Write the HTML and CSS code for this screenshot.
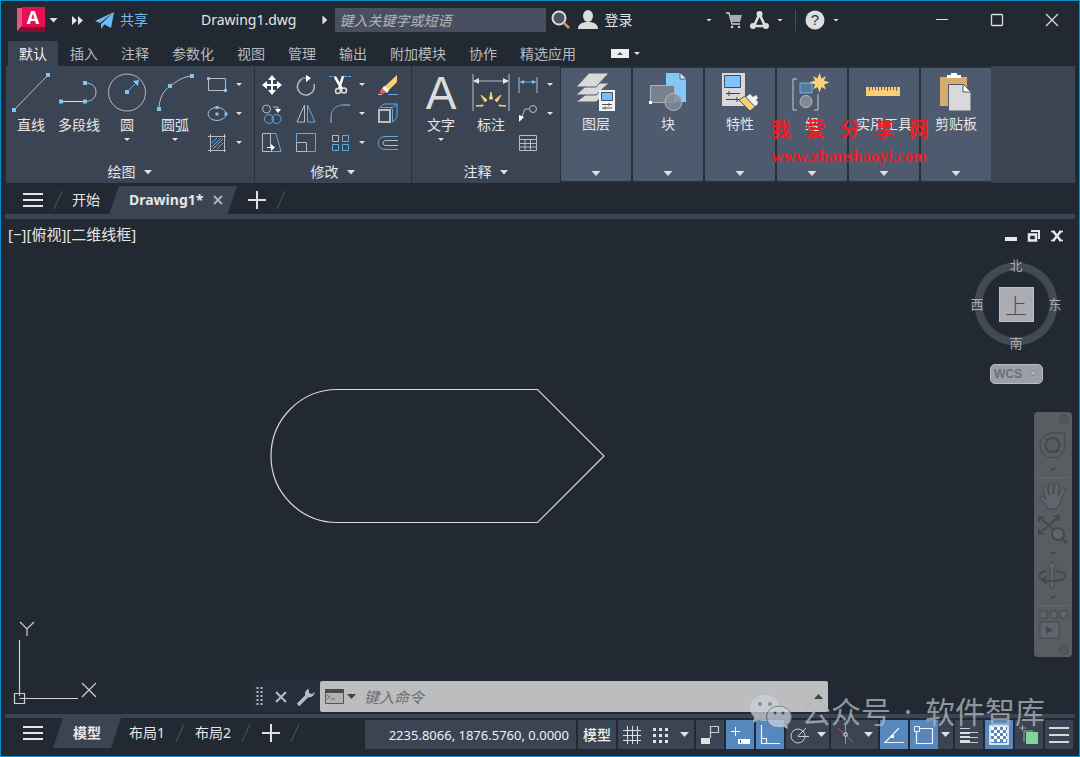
FILE: index.html
```html
<!DOCTYPE html>
<html lang="zh-CN">
<head>
<meta charset="utf-8">
<title>Drawing1.dwg</title>
<link rel="stylesheet" href="styles.css">
</head>
<body>
<div class="app">

<header class="titlebar">
  <button class="logo" aria-label="应用程序菜单">
    <svg width="28" height="26" viewBox="0 0 28 26"><path d="M0 1h5v18l-5 5z" fill="#e8557f"/><path d="M5 0h23v20H5z" fill="#e51050"/><path d="M5 20h23v5H0z" fill="#8d0a32"/><text x="16" y="17" class="logo-letter">A</text></svg>
    <i class="caret caret-lg"></i>
  </button>
  <button class="more" aria-label="更多"><svg width="11" height="9" viewBox="0 0 11 9"><path d="M0 0l5 4.500L0 9zM6 0l5 4.500L6 9z" fill="#e2e2e2"/></svg></button>
  <button class="share"><svg width="19" height="17" viewBox="0 0 19 17"><path d="M19 0L0 9l5 2zM19 0L6 12v5l3-4zM19 0L9 12l7 4z" fill="#6cbcf5"/></svg>共享</button>
  <span class="filename">Drawing1.dwg</span>
  <i class="caret-right"></i>
  <input class="search" type="text" placeholder="键入关键字或短语" aria-label="搜索">
  <button class="icon-btn find" aria-label="查找"><svg width="20" height="20" viewBox="0 0 20 20"><circle cx="8" cy="8" r="6.500" fill="#4c545f" stroke="#ddd" stroke-width="2"/><path d="M13 13l5 5" stroke="#c79a63" stroke-width="2.500"/></svg></button>
  <button class="login"><svg width="20" height="20" viewBox="0 0 20 20"><ellipse cx="10" cy="6" rx="5" ry="6" fill="#dcdcdc"/><path d="M0 19c0-5 4-6 7-7h6c3 1 7 2 7 7z" fill="#dcdcdc"/></svg>登录</button>
  <div class="title-tools">
    <i class="caret"></i>
    <button class="icon-btn cart" aria-label="购物车"><svg width="16" height="17" viewBox="0 0 16 17"><path d="M0 1h3l3 11h8" fill="none" stroke="#cfcfcf" stroke-width="1.300"/><path d="M4 3h12l-2 7H6z" fill="#aaa"/><circle cx="6" cy="15" r="1.300" fill="#ccc"/><circle cx="13" cy="15" r="1.300" fill="#ccc"/></svg></button>
    <button class="icon-btn" aria-label="应用商店"><svg width="19" height="18" viewBox="0 0 19 18"><path d="M9.500 3L4 15h11z" fill="none" stroke="#dedede" stroke-width="2.600"/><circle cx="9.500" cy="3" r="3" fill="#dedede"/><circle cx="3" cy="15" r="3" fill="#dedede"/><circle cx="16" cy="15" r="3" fill="#dedede"/></svg></button>
    <i class="caret"></i>
    <i class="rule"></i>
    <button class="icon-btn" aria-label="帮助"><svg width="20" height="20" viewBox="0 0 20 20"><circle cx="10" cy="10" r="9.500" fill="#dedede"/><text x="10" y="15" class="help-mark">?</text></svg></button>
    <i class="caret"></i>
  </div>
  <div class="window-buttons">
    <button aria-label="最小化"><svg width="14" height="14"><path d="M1 6.500h12" stroke="#ddd"/></svg></button>
    <button aria-label="最大化"><svg width="14" height="14"><rect x="1.500" y="1.500" width="11" height="11" rx="1" fill="none" stroke="#ddd" stroke-width="1.300"/></svg></button>
    <button aria-label="关闭"><svg width="14" height="14"><path d="M1 1l12 12M13 1L1 13" stroke="#ddd" stroke-width="1.200"/></svg></button>
  </div>
</header>

<nav class="ribbon-tabs">
  <button class="ribbon-tab active">默认</button>
  <button class="ribbon-tab">插入</button>
  <button class="ribbon-tab">注释</button>
  <button class="ribbon-tab">参数化</button>
  <button class="ribbon-tab">视图</button>
  <button class="ribbon-tab">管理</button>
  <button class="ribbon-tab">输出</button>
  <button class="ribbon-tab">附加模块</button>
  <button class="ribbon-tab">协作</button>
  <button class="ribbon-tab">精选应用</button>
  <button class="collapse" aria-label="最小化功能区"><svg width="18" height="9" viewBox="0 0 18 9"><path d="M0 0h18v9H0z" fill="#eee"/><path d="M6 6l3-3 3 3z" fill="#555"/></svg><i class="caret"></i></button>
</nav>

<section class="ribbon">
  <div class="panel panel-draw">
    <div class="tools">
      <button class="tool"><svg width="40" height="40"><path d="M3 38L37 3" class="g"/><path d="M1 36h4v4H1zM35 1h4v4h-4z" class="d"/></svg>直线</button>
      <button class="tool"><svg width="40" height="40"><path d="M2 29.500h24" stroke="#e4e4e4" fill="none"/><path d="M26 29.500c7 0 11-4 11-9.500s-4-9-11-9" class="g"/><path d="M0 27.500h4v4H0zM24 27.500h4v4h-4zM24 9h4v4h-4z" class="d"/></svg>多段线</button>
      <button class="tool"><svg width="40" height="40"><circle cx="20" cy="20.500" r="18.500" class="g"/><path d="M20 20L30 10" class="b"/><path d="M18 18h4v4h-4zM26 9l6-1-1 6z" class="d"/></svg>圆<i class="caret"></i></button>
      <button class="tool"><svg width="40" height="40"><path d="M4 37C4 26 9 18 15 14S28 4 38 4" class="g"/><path d="M2 35h4v4H2zM13 12h4v4h-4zM35 2h4v4h-4z" class="d"/></svg>圆弧<i class="caret"></i></button>
      <div class="small-tools">
        <button aria-label="矩形"><svg width="22" height="22"><path d="M2.500 4.500h17v12h-17z" class="g"/><path d="M1 3h3v3H1zM18 15h3v3h-3z" class="d"/></svg></button><i class="caret"></i>
        <button aria-label="椭圆"><svg width="22" height="22"><ellipse cx="11" cy="11" rx="9" ry="6.500" class="g"/><path d="M9.500 3h3v3h-3zM9.500 9.500h3v3h-3zM18.500 9.500h3v3h-3z" class="d"/></svg></button><i class="caret"></i>
        <button aria-label="图案填充"><svg width="22" height="22"><path d="M2 4.500h18M2 18.500h18M4.500 2v18M18.500 2v18" class="g"/><path d="M6 11l5-5M6 15l9-9M7 17L17 7M11 17l6-6" class="b"/></svg></button><i class="caret"></i>
      </div>
    </div>
    <button class="panel-name">绘图<i class="caret caret-lg"></i></button>
  </div>

  <div class="panel panel-modify">
    <div class="tools modify-grid">
      <button aria-label="移动"><svg width="22" height="22"><path d="M3 11h16M11 3v16" stroke="#fff" stroke-width="2"/><path d="M11 1l4 5H7zM11 21l4-5H7zM1 11l5-4v8zM21 11l-5-4v8z" fill="#fff"/></svg></button>
      <button aria-label="旋转"><svg width="22" height="22"><path d="M7 5a8.500 8.500 0 1 0 12 5" class="g" stroke-width="1.500"/><path d="M7 4h7" class="g"/><path d="M11 1l5 3-5 4z" fill="#fff"/></svg></button>
      <button aria-label="修剪"><svg width="22" height="22"><path d="M0 2.500h7M15 2.500h7" class="b" stroke-dasharray="3 1"/><path d="M6 3l7 12M14 2l-4 13" stroke="#fff" stroke-width="2.500"/><circle cx="9" cy="17" r="2.500" fill="none" stroke="#ddd" stroke-width="1.500"/><circle cx="15" cy="16.500" r="2.500" fill="none" stroke="#ddd" stroke-width="1.500"/></svg></button>
      <i class="caret"></i>
      <button aria-label="删除"><svg width="22" height="22"><path d="M20 1v7l-9 9-4-4z" fill="#f6cf79"/><path d="M7 12l5 4-2 3-5-4z" fill="#fff"/><path d="M5 14l4 4c-2 3-7 2-6-1z" fill="#ec5b64"/><path d="M1 20.500h4" class="g"/><path d="M11 20.500h10" class="b"/></svg></button>

      <button aria-label="复制"><svg width="22" height="22"><circle cx="5.500" cy="6" r="4" class="g"/><path d="M12 4h5v3" class="g"/><path d="M14 6h6l-3 4z" fill="#fff"/><circle cx="8" cy="16" r="4.500" class="b"/><circle cx="15.500" cy="16" r="4.500" class="b"/></svg></button>
      <button aria-label="镜像"><svg width="22" height="22"><path d="M9.500 2v17H2z" class="g"/><path d="M12.500 2v17H20z" class="b"/></svg></button>
      <button aria-label="圆角"><svg width="22" height="22"><path d="M2 20v-6M14 2h7" class="g"/><path d="M2 14C2 7 7 2 14 2" class="b"/></svg></button>
      <i class="caret"></i>
      <button aria-label="分解"><svg width="22" height="22"><path d="M2 7h11v12H2z" class="g" stroke-width="2"/><path d="M2 5l5-4h13v13l-4 5M14 6l6-5M15.500 6v13M4 4.500h12" class="b"/></svg></button>

      <button aria-label="拉伸"><svg width="22" height="22"><path d="M9.500 15V1.500h-8v18H11" class="g"/><path d="M10 1.500h5L20 19.500h-9" class="b"/><path d="M6 15.500h6" stroke="#fff"/><path d="M10 12l4 3.500-4 3.500z" fill="#fff"/></svg></button>
      <button aria-label="缩放"><svg width="22" height="22"><path d="M1.500 10V1.500h19v18H12" class="b"/><path d="M1.500 10.500h10v9h-10z" class="g"/></svg></button>
      <button aria-label="阵列"><svg width="22" height="22"><path d="M3.500 3.500h6v6h-6z" class="g"/><path d="M13.500 3.500h6v6h-6zM3.500 12.500h6v6h-6zM13.500 12.500h6v6h-6z" class="b"/></svg></button>
      <i class="caret"></i>
      <button aria-label="偏移"><svg width="22" height="22"><path d="M21 4.500H8c-9 0-9 13 0 13h13" class="b"/><path d="M21 8.500H9c-4 0-4 5 0 5h12" class="g"/></svg></button>
    </div>
    <button class="panel-name">修改<i class="caret caret-lg"></i></button>
  </div>

  <div class="panel panel-annotate">
    <div class="tools">
      <button class="tool"><svg width="40" height="40"><text x="20" y="37" class="big-a">A</text></svg>文字<i class="caret"></i></button>
      <button class="tool"><svg width="40" height="40"><path d="M2 2v37M38 2v37M3 9h34" class="g"/><path d="M2 9l6-3v6zM38 9l-6-3v6z" fill="#e4e4e4"/><path d="M18.500 27l1.500-7 1.500 7zM10 23l6 5-2 2zM30 23l-6 5 2 2zM5 34l7-1v1zM35 34l-7-1v1z" fill="#f6cf79" stroke="#f6cf79"/></svg>标注</button>
      <div class="small-tools">
        <button aria-label="线性标注"><svg width="22" height="22"><path d="M2 3v16M20 3v16" class="g"/><path d="M3 8h16" class="b"/><path d="M3 8l4-2v4zM19 8l-4-2v4z" class="d"/></svg></button><i class="caret"></i>
        <button aria-label="引线"><svg width="22" height="22"><circle cx="16" cy="6" r="3.500" class="g"/><path d="M12 6H8l-4 10" class="g"/><path d="M2 12l5 2-5 5z" fill="#fff"/></svg></button><i class="caret"></i>
        <button aria-label="表格"><svg width="22" height="22"><path d="M2.500 3.500h17v15h-17zM2.500 7.500h17M2.500 11.500h17M2.500 15h17M8 7.500v11M13.500 7.500v11" class="g"/></svg></button>
      </div>
    </div>
    <button class="panel-name">注释<i class="caret caret-lg"></i></button>
  </div>

  <div class="cards">
    <button class="card"><svg width="44" height="40"><g fill="#d9d9d9" stroke="#4e5a6d"><path d="M15 20h19L22 30H2z"/><path d="M15 11h20L22 23H2z"/><path d="M15 1h20L22 15H2z"/></g><path d="M25 18h16v21H25z" fill="#f3f3f3"/><path d="M27.500 20.500h11v8h-11z" fill="#6fc0fb" stroke="#47505d"/><path d="M28 32.500h10M28 36h10M35 31v3M31 34.500v3" stroke="#555"/></svg>图层<i class="caret caret-lg"></i></button>
    <button class="card"><svg width="44" height="40"><path d="M20 1h14l6 6v23H20z" fill="#86c7fa"/><path d="M34 1v6h6" fill="#d7edff" stroke="#47607a"/><path d="M4.500 13.500h24v17h-24z" fill="#79818e" stroke="#aeb3bb"/><circle cx="27.500" cy="30" r="8.500" fill="#868d98" fill-opacity=".8" stroke="#b6bac1"/><path d="M3 29h3v3H3z" fill="#fff"/></svg>块<i class="caret caret-lg"></i></button>
    <button class="card"><svg width="44" height="40"><path d="M4 1h23v33H4z" fill="#d9d9d9"/><path d="M6.500 3.500h16v12h-16z" fill="#7cc4fb" stroke="#454d58"/><path d="M8 21.500h14M8 27.500h14M11 19v5M19 25v5" stroke="#444"/><path d="M28 25l4-3 3 3 3-2 2 3-2 2 2 2-1 3-4 2z" fill="#f3f3f3"/><path d="M21 28l6-4 10 11-5 4z" fill="#f6cf79" stroke="#4e5a6d"/></svg>特性<i class="caret caret-lg"></i></button>
    <button class="card"><svg width="44" height="40"><path d="M7 7H3v31h4M28 22v16h-4" fill="none" stroke="#c4c8ce"/><path d="M10 11h12v10H10z" fill="#54799f" stroke="#6cb4ec"/><circle cx="16" cy="29.500" r="6" fill="#828995" stroke="#b6bac1"/><path d="M29.500 1l2 5.500 4.500-2.500-2 4.500 5.500 2-5.500 2 2 5-4.500-2.500-2 5.500-2-5.500-4.500 2.500 2-5-5.500-2 5.500-2-2-4.500 4.500 2.500z" fill="#f9d27b"/></svg>组<i class="caret caret-lg"></i></button>
    <button class="card"><svg width="44" height="40"><path d="M4 15h34v9H4z" fill="#f9cf75"/><path d="M7.500 15v4M10.500 15v3M13.500 15v3M16.500 15v4M19.500 15v3M22.500 15v3M25.500 15v4M28.500 15v3M31.500 15v3M34.500 15v4" stroke="#6a624d"/></svg>实用工具<i class="caret caret-lg"></i></button>
    <button class="card"><svg width="44" height="40"><path d="M6 5h27v29H6z" fill="#d9aa6d"/><path d="M13 6V3h4V1h6v2h4v3z" fill="#fff"/><path d="M14.500 12.500H29l8 8V39H14.500z" fill="#d9d9d9" stroke="#4e5a6d"/><path d="M29 12v8h8z" fill="#fff" stroke="#4e5a6d"/></svg>剪贴板<i class="caret caret-lg"></i></button>
  </div>
  <div class="stamp"><div class="stamp-name"><span>我</span><span>爱</span><span>分</span><span>享</span><span>网</span></div><div class="stamp-url">www.zhanshaoyi.com</div></div>
</section>

<nav class="file-tabs">
  <button class="menu" aria-label="文件菜单"><svg width="20" height="16"><path d="M0 2h20M0 8h20M0 14h20" stroke="#e6e6e6" stroke-width="2"/></svg></button>
  <svg class="slash" width="10" height="18"><path d="M1 18L9 0" stroke="#4b5665"/></svg>
  <button class="file-tab">开始</button>
  <button class="file-tab current">Drawing1*<svg width="10" height="10"><path d="M1 1l8 8M9 1L1 9" stroke="#aeb2b8" stroke-width="2"/></svg></button>
  <button class="add" aria-label="新图形"><svg width="18" height="18"><path d="M0 9h18M9 0v18" stroke="#e2e2e2" stroke-width="2"/></svg></button>
  <svg class="slash" width="10" height="18"><path d="M1 18L9 0" stroke="#4b5665"/></svg>
</nav>

<main class="viewport">
  <div class="view-label"><button>[−]</button><button>[俯视]</button><button>[二维线框]</button></div>

  <svg class="drawing" width="338" height="138" viewBox="0 0 338 138"><path d="M68.500 2.500H268.500L335 69l-66.500 66.500H68.500a66.500 66.500 0 0 1 0-133z" fill="none" stroke="#d6d8da" stroke-width="1.200"/></svg>

  <svg class="ucs" width="86" height="86" viewBox="0 0 86 86"><path d="M7.500 20v56M7.500 78.500H66M2.500 73.500h10v10h-10zM8 2l7 7 7-7M15 9v7M70 63l14 14M84 63L70 77" fill="none" stroke="#cfd0d1" stroke-width="1.200"/></svg>

  <div class="doc-buttons">
    <button aria-label="最小化图形"><svg width="14" height="14"><path d="M1 8h12v4H1z" fill="#e8e8e8"/></svg></button>
    <button aria-label="还原图形"><svg width="14" height="14"><path d="M4 2h8v8" fill="none" stroke="#e8e8e8" stroke-width="2"/><path d="M2 5.500h7v6H2z" fill="none" stroke="#e8e8e8" stroke-width="2.500"/></svg></button>
    <button aria-label="关闭图形"><svg width="14" height="14"><path d="M3 2l8 10M11 2L3 12" stroke="#e8e8e8" stroke-width="2.500"/><path d="M1 2.500h4M9 2.500h4M1 11.500h4M9 11.500h4" stroke="#e8e8e8" stroke-width="1.500"/></svg></button>
  </div>

  <div class="compass">
    <span class="north">北</span><span class="west">西</span>
    <button class="cube">上</button>
    <span class="east">东</span><span class="south">南</span>
  </div>
  <button class="wcs">WCS<svg width="12" height="8"><path d="M2 1h8L6 6z" fill="#b4b6c0" stroke="#85879a"/></svg></button>

  <div class="navbar">
    <svg class="nav-end" width="10" height="10"><circle cx="5" cy="5" r="4" class="n"/><path d="M3 3l4 4M7 3L3 7" class="n"/></svg>
    <button aria-label="导航控制盘"><svg width="30" height="30"><path d="M16 2h11v13a12.500 12.500 0 1 1-11-13z" class="n"/><circle cx="14.500" cy="14" r="7" class="n" stroke-width="2"/><path d="M8 20c-4 0-5 2-4 4M20 20c4 0 6 2 5 4M9 21h11" class="n"/></svg></button>
    <i class="caret nav-caret"></i>
    <hr>
    <button aria-label="平移"><svg width="30" height="30"><path d="M10 28c-1-4-6-8-8-12 2-2 4 0 6 2L5 7c0-3 3-3 4 0l2 7V4c0-3 3-3 4 0v9l2-9c1-3 4-2 4 1l-1 10 4-7c2-2 4-1 3 1l-4 10c-1 4-3 6-4 9z" class="n nf"/></svg></button>
    <button aria-label="缩放视图"><svg width="30" height="30"><path d="M2 3l18 15M20 2L2 18M1 7V2h5M16 1h5v5M1 14v5h5" class="n" stroke-width="2"/><circle cx="20" cy="19" r="6" class="n nf" stroke-width="2"/><path d="M24 24l5 4" class="n" stroke-width="3"/></svg></button>
    <i class="caret nav-caret"></i>
    <button aria-label="动态观察"><svg width="30" height="30"><path d="M12 29V9H9l5-7 5 7h-3v20z" class="n nf"/><path d="M18 12c15 1 12 10-4 10C-2 22-2 13 9 12M9 17l-5 4 5 4" class="n" stroke-width="2"/></svg></button>
    <i class="caret nav-caret"></i>
    <hr>
    <button aria-label="运动展示"><svg width="30" height="30"><path d="M2 2h7v7H2zM12 2h7v7h-7zM22 2h7v7h-7zM2 13h19v16H2z" class="n nf"/><path d="M8 17l7 4-7 4z" fill="#44494f"/></svg></button>
    <svg class="nav-end bottom" width="10" height="10"><circle cx="5" cy="5" r="4" class="n"/><path d="M3 5h4" class="n"/></svg>
  </div>

  <div class="command">
    <div class="command-tools">
      <svg width="8" height="20"><path d="M1.500 0v20M5.500 0v20" stroke="#b8bac0" stroke-width="2" stroke-dasharray="2 2"/></svg>
      <button aria-label="关闭命令行"><svg width="12" height="12"><path d="M1 1l10 10M11 1L1 11" stroke="#b9bbc0" stroke-width="2"/></svg></button>
      <button aria-label="自定义"><svg width="18" height="18"><path d="M1 17L11 7" stroke="#b9bbc0" stroke-width="3.500"/><path d="M11 1c-3 2-4 5-2 7 3 3 8 1 9-4l-3 2-3-1V2z" fill="#b9bbc0"/></svg></button>
    </div>
    <div class="command-entry">
      <button aria-label="最近使用的命令"><svg width="19" height="15"><path d="M.5.500h18v14H.5z" fill="#b0b1b3" stroke="#555"/><path d="M0 0h19v4H0z" fill="#4b4b4b"/><path d="M2 6l3 2-3 2M6 10h4" fill="none" stroke="#666"/></svg><i class="caret caret-lg dark"></i></button>
      <input type="text" placeholder="键入命令" aria-label="命令">
      <i class="caret-up"></i>
    </div>
  </div>
</main>

<footer class="statusbar">
  <button class="menu" aria-label="布局菜单"><svg width="20" height="16"><path d="M0 2h20M0 8h20M0 14h20" stroke="#e6e6e6" stroke-width="2"/></svg></button>
  <button class="layout-tab current">模型</button>
  <button class="layout-tab">布局1</button>
  <svg class="slash" width="10" height="18"><path d="M1 18L9 0" stroke="#4b5665"/></svg>
  <button class="layout-tab">布局2</button>
  <svg class="slash" width="10" height="18"><path d="M1 18L9 0" stroke="#4b5665"/></svg>
  <button class="add" aria-label="新布局"><svg width="18" height="18"><path d="M0 9h18M9 0v18" stroke="#e2e2e2" stroke-width="2"/></svg></button>
  <svg class="slash" width="10" height="18"><path d="M1 18L9 0" stroke="#4b5665"/></svg>
  <div class="status-tools">
    <button class="coords">2235.8066, 1876.5760, 0.0000</button>
    <button class="space">模型</button>
    <div class="group grid-snap">
      <button aria-label="栅格"><svg width="20" height="20"><path d="M1 5.500h18M1 10.500h18M1 15.500h18M5.500 1v18M10.500 1v18M15.500 1v18" stroke="#ddd"/></svg></button>
      <button aria-label="捕捉"><svg width="20" height="20"><path d="M4.500 3v15M10.500 3v15M16.500 3v15" stroke="#e2e2e2" stroke-width="3" stroke-dasharray="3 3"/></svg></button>
      <i class="caret caret-lg"></i>
    </div>
    <button aria-label="推断约束"><svg width="20" height="20"><path d="M1 13h9v6H1z" fill="#e2e2e2"/><path d="M10.500 13V1.500h8v6h-8" fill="none" stroke="#ccc" stroke-width="1.200"/></svg></button>
    <button class="on" aria-label="动态输入"><svg width="20" height="20"><path d="M5.500 2v9M1 6.500h9" stroke="#fff"/><path d="M8 14h12v5H8z" fill="#fff"/><path d="M10 15h1v3h-1z" fill="#456"/></svg></button>
    <button class="on" aria-label="正交"><svg width="20" height="20"><path d="M1.500 0v18.500H20M1.500 13.500h5v5" fill="none" stroke="#eef3f9" stroke-width="1.200"/></svg></button>
    <div class="group polar">
      <button aria-label="极轴追踪"><svg width="20" height="20"><circle cx="8" cy="11" r="7" fill="none" stroke="#ccc"/><path d="M8 11.500h11M8 11l8-8" stroke="#ccc"/></svg></button>
      <i class="caret caret-lg"></i>
    </div>
    <div class="group iso">
      <button aria-label="等轴测草图"><svg width="20" height="20"><path d="M3 3l15 14" stroke="#c4575c"/><path d="M10.500 0v19" stroke="#4fc078"/><path d="M9 8h3v3H9z" fill="#323a45" stroke="#ddd"/></svg></button>
      <i class="caret caret-lg"></i>
    </div>
    <button class="on" aria-label="对象捕捉追踪"><svg width="20" height="20"><path d="M15 3L1 17.500h19" fill="none" stroke="#eef3f9" stroke-width="1.200"/><path d="M7 10h3v3H7z" fill="#fff"/></svg></button>
    <div class="group snap">
      <button class="on" aria-label="对象捕捉"><svg width="20" height="20"><path d="M6 3.500h12.500v15h-16V7" fill="none" stroke="#eef3f9" stroke-width="1.200"/><path d="M.5 1.500h5v5h-5z" fill="none" stroke="#eef3f9"/></svg></button>
      <i class="caret caret-lg"></i>
    </div>
    <button aria-label="线宽"><svg width="20" height="20"><path d="M1 3.500h10M1 7.500h18M1 12.500h18" stroke="#ccc"/><path d="M1 8h10M1 12h10" stroke="#ddd" stroke-width="2"/><path d="M1 16.500h10" stroke="#ddd" stroke-width="3"/><path d="M11 17.500h8" stroke="#ccc"/></svg></button>
    <button class="on" aria-label="透明度"><svg width="20" height="20"><path d="M1 1h18v18H1z" fill="none" stroke="#fff" stroke-width="1.500"/><path d="M2 3.500h15M2 9.500h15M2 15.500h15M5 6.500h13M5 12.500h13" stroke="#fff" stroke-width="3" stroke-dasharray="3 3"/></svg></button>
    <button aria-label="选择循环"><svg width="20" height="20"><path d="M3.500 0v6M.5 3h6M5 17V6h9" fill="none" stroke="#aaa"/><path d="M7 7h12v12H7z" fill="#7fd69b"/></svg></button>
    <button aria-label="自定义状态栏"><svg width="20" height="20"><path d="M0 3h20M0 10h20M0 17h20" stroke="#d8d8d8" stroke-width="2"/></svg></button>
  </div>
</footer>

<div class="credit">
  <svg width="42" height="34" viewBox="0 0 42 34"><ellipse cx="15" cy="13" rx="15" ry="13" fill="#ccd2d8"/><path d="M4 22l-1 6 7-4z" fill="#ccd2d8"/><circle cx="10" cy="9" r="2" fill="#777"/><circle cx="20" cy="9" r="2" fill="#777"/><ellipse cx="29" cy="22" rx="12.500" ry="11" fill="#c9d3df" stroke="#6a737e"/><path d="M37 29l1 5-6-3z" fill="#c9d3df"/><circle cx="25" cy="18" r="1.500" fill="#555"/><circle cx="33" cy="18" r="1.500" fill="#555"/></svg>
  <div class="credit-name"><span>公众号</span><span>·</span><span>软件智库</span></div>
</div>

</div>
</body>
</html>
```
FILE: styles.css
```css
* { box-sizing: border-box; }
body { margin: 0; background: #222932; }
button, input {
  font: inherit;
  color: inherit;
  background: none;
  border: 0;
  padding: 0;
  margin: 0;
  min-width: 0;
}
button { display: flex; align-items: center; justify-content: center; white-space: nowrap; }
svg { display: block; flex: none; overflow: visible; }

.app {
  position: relative;
  display: flex;
  flex-direction: column;
  min-height: 100vh;
  border: 1px solid #0a8fcd;
  background: #222932;
  color: #e6e6e6;
  font: 14px/20px "Noto Sans", "Noto Sans CJK SC", sans-serif;
  overflow: hidden;
}

.g { fill: none; stroke: #b9bdc3; }
.b { fill: none; stroke: #62a9de; }
.d { fill: #7cc4fb; }
.n { fill: none; stroke: #44494f; }
.nf { fill: #60656d; }

.caret {
  flex: none;
  width: 6px;
  height: 3px;
  background: #e0e0e0;
  clip-path: polygon(0 0, 100% 0, 50% 100%);
}
.caret-lg { width: 9px; height: 5px; }
.caret-right { width: 5px; height: 9px; background: #e0e0e0; clip-path: polygon(0 0, 100% 50%, 0 100%); }
.caret-up { width: 9px; height: 5px; background: #444; clip-path: polygon(50% 0, 100% 100%, 0 100%); }
.dark { background: #444; }

/* title bar */
.titlebar { display: flex; align-items: center; height: 38px; padding-left: 16px; }
.logo { gap: 4px; }
.logo-letter { font: bold 18px "Open Sans", sans-serif; fill: #fff; text-anchor: middle; }
.more { margin-left: 14px; }
.share { margin-left: 12px; gap: 6px; color: #79b9ea; }
.filename { margin: 0 26px 0 53px; }
.search {
  flex: 0 1 211px;
  height: 24px;
  margin-left: 8px;
  padding: 0 4px;
  background: #484f60;
  font-style: italic;
}
.search::placeholder { color: #b3b6bd; opacity: 1; }
.find { margin-left: 5px; }
.login { margin-left: 7px; gap: 6px; }
.title-tools { display: flex; align-items: center; gap: 8px; margin-left: auto; }
.cart { margin-left: 6px; }
.rule { width: 1px; height: 21px; margin: 0 1px 0 4px; background: #454e5f; }
.help-mark { font: 15px "Liberation Sans", sans-serif; fill: #333; text-anchor: middle; }
.window-buttons { display: flex; gap: 41px; margin: 0 20px 0 96px; }

/* ribbon tabs */
.ribbon-tabs { display: flex; gap: 1px; height: 27px; padding: 2px 7px 0; color: #b8bbc0; }
.ribbon-tab { padding: 0 11px; }
.ribbon-tab.active { background: #3b4453; color: #f0f0f0; }
.collapse { margin-left: 23px; gap: 5px; }

/* ribbon */
.ribbon {
  position: relative;
  display: flex;
  min-height: 117px;
  margin: 0 4px 0 5px;
  background: #3b4453;
}
.panel {
  display: flex;
  flex-direction: column;
  justify-content: space-between;
  border-right: 1px solid #28303b;
}
.panel-draw { flex: 0 0 249px; }
.panel-modify { flex: 0 0 157px; }
.panel-annotate { flex: 0 0 149px; }
.panel-name { height: 22px; gap: 8px; }
.tools { display: flex; align-items: flex-start; padding: 4px 0 0 1px; }
.tool { flex-direction: column; width: 48px; padding-top: 2px; }
.tool svg { margin-bottom: 3px; }
.tool .caret { margin-top: 3px; }
.small-tools {
  display: grid;
  grid-template-columns: 22px 6px;
  grid-auto-rows: 29px;
  column-gap: 8px;
  align-items: center;
  margin-left: 7px;
}
.modify-grid {
  display: grid;
  grid-template-columns: 34px 34px 34px 10px 42px;
  grid-auto-rows: 29px;
  place-items: center;
  padding-left: 0;
}
.panel-annotate .tools { padding-left: 4px; }
.panel-annotate .tool { width: 50px; }
.panel-annotate .small-tools { margin-left: 1px; }
.big-a { font: 46px "Liberation Sans", sans-serif; fill: #dcdcdc; text-anchor: middle; }

.cards { display: flex; gap: 2px; padding: 2px 0; background: #28303b; }
.card {
  flex-direction: column;
  justify-content: flex-start;
  width: 70px;
  padding: 4px 0 5px;
  background: #4e5a6d;
}
.card svg { margin-bottom: 2px; }
.card .caret { margin-top: auto; }

.stamp { position: absolute; left: 765px; top: 50px; width: 158px; color: #ee1c25; }
.stamp-name { display: flex; justify-content: space-between; font: bold 20px/26px "Noto Sans CJK SC", sans-serif; }
.stamp-url { font: bold 17px/30px "Liberation Serif", serif; }

/* file tabs */
.file-tabs { display: flex; align-items: center; height: 31px; padding: 2px 0 0 22px; }
.menu { width: 20px; }
.slash { margin-left: 10px; }
.file-tab { margin-left: 9px; }
.file-tab.current {
  gap: 10px;
  align-self: stretch;
  margin: 1px 0 0 9px;
  padding: 0 14px 0 20px;
  background: #3b4453;
  clip-path: polygon(10px 0, 100% 0, calc(100% - 10px) 100%, 0 100%);
  font-weight: 700;
}
.add { margin-left: 11px; }

/* drawing area */
.viewport {
  position: relative;
  flex: 1 0 auto;
  min-height: 504px;
  border: solid #3b4453;
  border-width: 5px 0 4px;
  margin: 0 4px;
}
.view-label { position: absolute; left: 3px; top: 5px; display: flex; font-size: 15px; }
.drawing { position: absolute; left: 264px; top: 168px; }
.ucs { position: absolute; left: 7px; bottom: 8px; }
.doc-buttons { position: absolute; right: 11px; top: 10px; display: flex; gap: 9px; }

.compass {
  position: absolute;
  right: 13px;
  top: 37px;
  width: 92px;
  height: 96px;
  display: grid;
  grid-template-columns: 14px 1fr 14px;
  grid-template-rows: 18px 1fr 18px;
  place-items: center;
  color: #a9abae;
  font-size: 13px;
  background: radial-gradient(circle, transparent 33px, #444a52 34px, #444a52 41px, transparent 42px);
}
.north, .south { grid-column: 1 / 4; }
.cube { width: 35px; height: 35px; background: #aaacb1; border: 1px solid #c0c2c4; color: #4a4f58; font: 300 22px/30px "Noto Sans CJK SC", sans-serif; }
.wcs {
  position: absolute;
  right: 32px;
  top: 145px;
  width: 53px;
  height: 20px;
  gap: 5px;
  border: 1px solid #b8bac4;
  border-radius: 5px;
  background: #9c9eaa;
  color: #6d6f7a;
  font: bold 12px/18px "Liberation Sans", sans-serif;
}

.navbar {
  position: absolute;
  right: 3px;
  top: 193px;
  width: 38px;
  min-height: 245px;
  display: flex;
  flex-direction: column;
  align-items: center;
  padding: 2px 3px;
  border-radius: 4px;
  background: #575d61;
}
.navbar hr { width: 100%; height: 1px; margin: 6px 0 3px; border: 0; background: #656a6e; }
.nav-end { align-self: flex-end; margin-bottom: 7px; }
.nav-end.bottom { margin: auto 0 0; }
.nav-caret { margin: 7px 0 0; background: #42474c; }
.nav-caret + button { margin-top: 4px; }
.navbar button + button { margin-top: 4px; }

.command { position: absolute; left: 0; right: 0; bottom: 2px; width: 576px; margin: 0 auto; display: flex; height: 31px; }
.command-tools { display: flex; align-items: center; justify-content: space-between; width: 68px; padding: 0 5px 0 4px; background: #272e3b; }
.command-entry { flex: 1; display: flex; align-items: center; padding: 0 5px; background: #bcbdbf; border-radius: 2px; }
.command-entry button { gap: 3px; }
.command-entry input { flex: 1; margin-left: 8px; font-size: 15px; font-style: italic; }
.command-entry input::placeholder { color: #6d6e70; opacity: 1; }

/* status bar */
.statusbar { display: flex; align-items: center; height: 38px; padding: 0 6px 8px 22px; }
.layout-tab { margin-left: 12px; }
.slash + .layout-tab { margin-left: 10px; }
.layout-tab.current {
  align-self: stretch;
  margin-left: 10px;
  padding: 0 20px;
  background: #3b4453;
  clip-path: polygon(10px 0, 100% 0, calc(100% - 10px) 100%, 0 100%);
  font-weight: 700;
}
.layout-tab.current + .layout-tab { margin-left: 8px; }
.status-tools { display: flex; gap: 2px; height: 29px; margin: 3px 0 0 auto; color: #f0f0f0; }
.status-tools button { min-width: 28px; background: #3b4453; }
.status-tools .coords { padding: 0 7px 0 24px; font-size: 13px; }
.status-tools .space { padding: 0 5px; font-weight: 500; }
.group { display: flex; align-items: center; background: #3b4453; }
.group button { align-self: stretch; }
.group .caret { margin: 0 3px; }
.grid-snap .caret { margin: 0 5px 0 6px; }
.iso .caret { margin: 0 5px; }
.status-tools .on { background: #5688bd; }

.credit {
  position: absolute;
  right: 34px;
  bottom: 23px;
  display: flex;
  align-items: center;
  gap: 9px;
  color: #b3b9c1;
  opacity: .75;
  pointer-events: none;
}
.credit-name { display: flex; gap: 13px; font: 30px/42px "Noto Sans", "Noto Sans CJK SC", sans-serif; }
```
